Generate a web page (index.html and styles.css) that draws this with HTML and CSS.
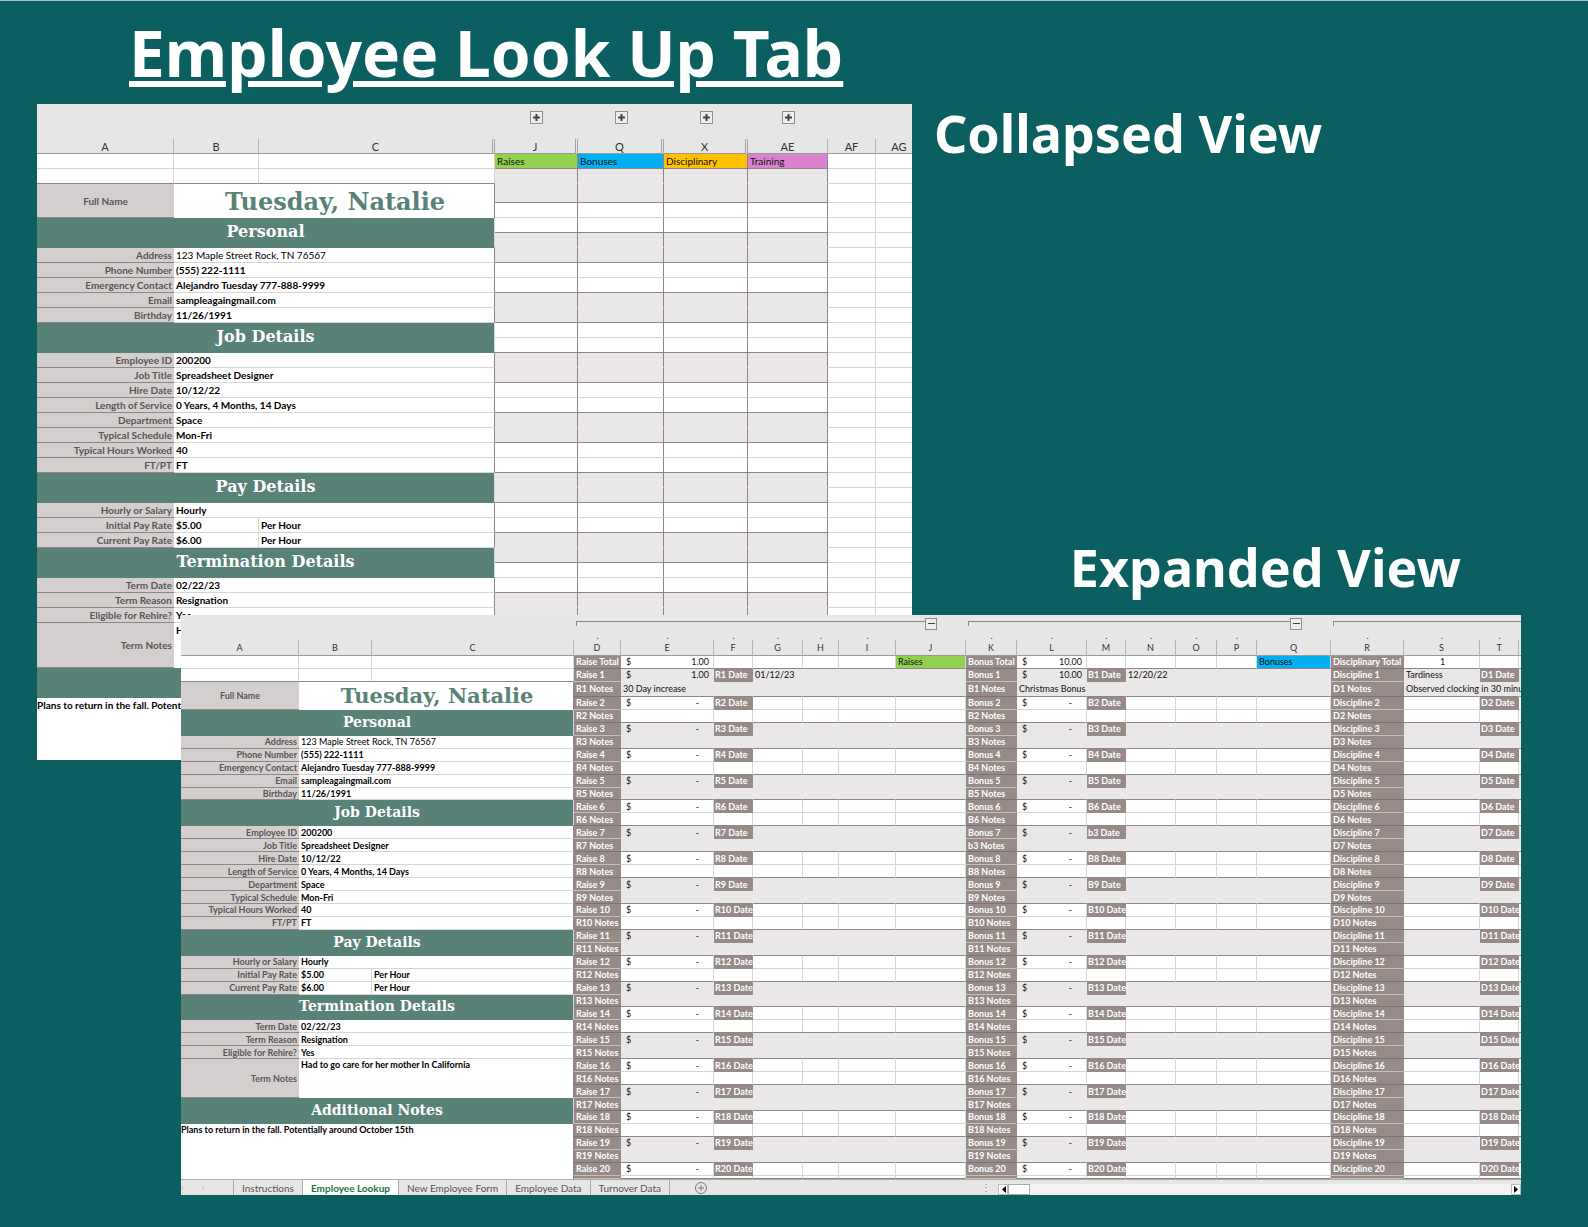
FILE: index.html
```
<!DOCTYPE html>
<html lang="en">
<head>
<meta charset="UTF-8" />
<meta name="viewport" content="width=device-width, initial-scale=1.0"/>
<title>Employee Look Up Tab</title>
<link rel="stylesheet" href="styles.css">
</head>
<body>

<h1>Employee Look Up Tab</h1>

<div class="top">
<section class="sheet collapsed">
<table id="collapsedTable"></table>
</section>
<div class="captions">
<h2>Collapsed View</h2>
<h2 class="right">Expanded View</h2>
</div>
</div>

<section class="sheet expanded">
<table id="expandedTable"></table>
<div class="tabbar">
<span class="arrows"><span>‹</span><span>›</span></span>
<button class="tab">Instructions</button>
<button class="tab active">Employee Lookup</button>
<button class="tab">New Employee Form</button>
<button class="tab">Employee Data</button>
<button class="tab last-tab">Turnover Data</button>
<button class="add" aria-label="New sheet">
<svg width="12" height="12" viewBox="0 0 12 12"><circle cx="6" cy="6" r="5.5" fill="none" stroke="#777"/><path d="M6 3v6M3 6h6" stroke="#777"/></svg>
</button>
<span class="grip">⋮</span>
<div class="scroll">
<button aria-label="Scroll left"><svg width="5" height="7" viewBox="0 0 5 7"><path d="M5 0v7L1 3.5z"/></svg></button>
<span class="thumb"></span>
<button class="end" aria-label="Scroll right"><svg width="5" height="7" viewBox="0 0 5 7"><path d="M0 0v7l4-3.5z"/></svg></button>
</div>
</div>
</section>

<script src="script.js"></script>
</body>
</html>
```

FILE: styles.css
```
* { box-sizing: border-box; }
body {
margin: 0;
border-top: 1px solid #9cc4c4;
background-color: #0b5f61;
color: #fff;
font-family: Lato, sans-serif;
min-height: 100vh;
overflow-x: hidden;
}
h1, h2 {
margin: 0;
font-family: "Noto Sans", sans-serif;
font-weight: 700;
white-space: nowrap;
}
h1 {
padding-left: 129px;
height: 103px;
font-size: 64px;
line-height: 104px;
text-decoration: underline;
text-decoration-thickness: 6px;
text-underline-offset: 4px;
}
h2 {
font-size: 52px;
line-height: 58px;
}
.top {
display: flex;
}
.captions {
flex: 1;
display: flex;
flex-direction: column;
justify-content: space-between;
padding: 0 127px 164px 22px;
}
.right { text-align: right; }

/* sheets */
.sheet {
background: #fff;
color: #111;
overflow: hidden;
}
.collapsed {
margin-left: 37px;
width: 55.1%;
font-size: 10px;
line-height: 13px;
}
.expanded {
position: relative;
margin: -145px 67px 32px 181px;
font-size: 9px;
line-height: 10px;
}
table {
table-layout: fixed;
width: 100%;
border-collapse: separate;
border-spacing: 0;
}
.expanded table { height: 564px; }
th, td {
padding: 0;
font-weight: normal;
text-align: left;
white-space: nowrap;
}
td {
border-right: 1px solid #d6d6d6;
border-bottom: 1px solid #d6d6d6;
padding: 1px 0 0 2px;
}
tbody tr { height: 15px; }
tbody tr.third { height: 19px; }
tbody tr.last { height: 2px; }
.expanded tbody tr { height: 12px; }
.expanded tbody tr.third { height: 14px; }
.expanded tbody tr.last { height: 3px; }

/* column headings */
thead th {
background: #e6e6e6;
color: #333;
text-align: center;
}
.outline { height: 35px; }
.dots { height: 0; }
.expanded .outline { height: 17px; }
.expanded .dots { height: 8px; }
.dots th { line-height: 6px; }
.letters { height: 15px; }
.letters th {
border-right: 1px solid #b5b5b5;
border-bottom: 1px solid #999;
}
.letters th.gap { border-right: 3px double #a5a5a5; }
.collapsed .letters { font-size: 11px; }
.expanded .letters { height: 16px; }
.toggle {
display: inline-flex;
align-items: center;
justify-content: center;
width: 13px;
height: 13px;
padding: 0;
border: 1px solid #8b8f94;
background: #eee;
vertical-align: middle;
}
.collapsed .outline th { padding-bottom: 9px; }
.group {
display: flex;
align-items: center;
padding-left: 2px;
}
.group .line {
flex: 1;
height: 5px;
border: solid #8a8a8a;
border-width: 1px 0 0 1px;
}
.group .toggle { width: 12px; height: 12px; }
.group .rest { width: 29px; }

/* employee card */
.label {
background: #d3cfce;
border-bottom-color: #8f8584;
border-right: 0;
color: #595556;
font-weight: bold;
text-align: right;
padding-right: 2px;
}
.name-label { text-align: center; }
.value {
color: #000;
font-weight: bold;
}
.value.plain { font-weight: normal; }
.edge { border-right-color: #8f8584; }
.section, .name {
font-family: "DejaVu Serif", serif;
font-weight: bold;
text-align: center;
}
.section {
background: #588277;
border-bottom-color: #588277;
color: #fff;
font-size: 16px;
padding: 0 0 3px;
}
.name {
color: #588277;
font-size: 24px;
line-height: 28px;
border-bottom: 0;
}
.expanded .section { font-size: 14px; padding-bottom: 1px; }
.expanded .name { font-size: 21px; line-height: 24px; }
.top-edge td:nth-child(-n+3) { border-bottom-color: #8f8584; }
.notes { vertical-align: top; border-bottom: 0; }
.extra { padding-left: 0; }

/* history columns */
.gray {
background: #e9e7e8;
border-right-color: #e9e7e8;
border-bottom-color: #e9e7e8;
}
.band-end { border-bottom-color: #8f8584; }
.collapsed .history { border-right-color: #8f8584; }
.tag {
background: #968b89;
border-right-color: #968b89;
border-bottom-color: #c9c0b0;
color: #fff;
font-weight: bold;
}
.tag.band-end { border-bottom-color: #7d7270; }
.date { border-bottom-color: #968b89; padding-left: 1px; border-right: 0; }
.center { text-align: center; }
.money div {
display: flex;
justify-content: space-between;
padding: 0 4px 0 3px;
}
.money .none { padding-right: 10px; }
.raises { background: #92d050; }
.bonuses { background: #00b0f0; }
.disciplinary { background: #ffc000; }
.training { background: #da82cf; }

/* sheet tabs */
.tabbar {
display: flex;
height: 16px;
background: #e6e6e6;
border-top: 1px solid #aaa;
font-size: 10px;
}
.tabbar button {
border: 0;
padding: 0;
font-family: inherit;
font-size: inherit;
}
.arrows {
display: flex;
gap: 18px;
width: 52px;
color: #aaa;
line-height: 14px;
}
.tabbar .tab {
padding: 0 8px;
background: #e6e6e6;
border-left: 1px solid #aaa;
color: #555;
}
.tabbar .active {
background: #fff;
color: #1a7343;
font-weight: bold;
}
.tabbar .last-tab { border-right: 1px solid #aaa; }
.tabbar .add {
display: flex;
align-items: center;
margin-left: 25px;
background: none;
}
.grip {
margin-left: auto;
margin-right: 7px;
color: #888;
line-height: 15px;
}
.scroll {
display: flex;
width: 39%;
margin-top: 4px;
background: #f2f2f2;
}
.scroll button {
display: flex;
align-items: center;
justify-content: center;
width: 10px;
background: #fff;
border: 1px solid #bbb;
}
.scroll .thumb {
width: 22px;
background: #fff;
border: 1px solid #aaa;
}
.scroll .end { margin-left: auto; }
```

FILE: script.js
```
const ROWS = 41;

// employee card, keyed by the table row it starts on
const card = {
2: { label: "Full Name", name: "Tuesday, Natalie", span: 2 },
4: { section: "Personal" },
6: { label: "Address", value: "123 Maple Street Rock, TN 76567", plain: true },
7: { label: "Phone Number", value: "(555) 222-1111" },
8: { label: "Emergency Contact", value: "Alejandro Tuesday 777-888-9999" },
9: { label: "Email", value: "sampleagaingmail.com" },
10: { label: "Birthday", value: "11/26/1991" },
11: { section: "Job Details" },
13: { label: "Employee ID", value: "200200" },
14: { label: "Job Title", value: "Spreadsheet Designer" },
15: { label: "Hire Date", value: "10/12/22" },
16: { label: "Length of Service", value: "0 Years, 4 Months, 14 Days" },
17: { label: "Department", value: "Space" },
18: { label: "Typical Schedule", value: "Mon-Fri" },
19: { label: "Typical Hours Worked", value: "40" },
20: { label: "FT/PT", value: "FT" },
21: { section: "Pay Details" },
23: { label: "Hourly or Salary", value: "Hourly" },
24: { label: "Initial Pay Rate", value: "$5.00", unit: "Per Hour" },
25: { label: "Current Pay Rate", value: "$6.00", unit: "Per Hour" },
26: { section: "Termination Details" },
28: { label: "Term Date", value: "02/22/23" },
29: { label: "Term Reason", value: "Resignation" },
30: { label: "Eligible for Rehire?", value: "Yes" },
31: { label: "Term Notes", value: "Had to go care for her mother In California", span: 3, notes: true },
34: { section: "Additional Notes" },
36: { extra: "Plans to return in the fall. Potentially around October 15th" }
};

function cardCells(r) {
if (r < 2) return `<td></td><td></td><td></td>`;
const c = card[r];
if (!c) return "";
if (c.section) return `<td class="section" colspan="3" rowspan="2">${c.section}</td>`;
if (c.extra) return `<td class="value notes extra edge" colspan="3" rowspan="5">${c.extra}</td>`;
const span = c.span || 1;
if (c.name) {
return `<td class="label name-label" rowspan="2">${c.label}</td><td class="name edge" colspan="2" rowspan="2">${c.name}</td>`;
}
const label = `<td class="label" rowspan="${span}">${c.label}</td>`;
if (c.unit) return `${label}<td class="value">${c.value}</td><td class="value edge">${c.unit}</td>`;
return `${label}<td class="value edge${c.plain ? " plain" : ""}${c.notes ? " notes" : ""}" colspan="2" rowspan="${span}">${c.value}</td>`;
}

// band 1 is rows 1-2, band 2 is rows 3-4 and so on, odd bands are shaded
function bandClass(r) {
let cls = Math.ceil(r / 2) % 2 === 1 ? "gray" : "";
if (r % 2 === 0) cls += " band-end";
return cls;
}

function cols(widths) {
return "<colgroup>" + widths.map(w => `<col style="width:${w}px">`).join("") + "</colgroup>";
}

function rowClass(r) {
if (r === 1) return "top-edge";
if (r === 2) return "third";
if (r === ROWS - 1) return "last";
return "";
}

const sign = plus => `<svg width="7" height="7" viewBox="0 0 7 7"><path d="M0 3.5h7${plus ? "M3.5 0v7" : ""}" stroke="#444" stroke-width="${plus ? 2 : 1}"/></svg>`;

function buildCollapsed() {
const groups = ["Raises", "Bonuses", "Disciplinary", "Training"];
let html = cols([137, 85, 236, 83, 86, 84, 80, 48, 47]);
html += `<thead><tr class="outline"><th></th><th></th><th></th>`;
html += groups.map(() => `<th><button class="toggle" aria-label="Expand">${sign(true)}</button></th>`).join("");
html += `<th></th><th></th></tr><tr class="letters">`;
["A", "B", "C", "J", "Q", "X", "AE", "AF", "AG"].forEach((l, i) => {
html += `<th class="${i > 1 && i < 6 ? "gap" : ""}">${l}</th>`;
});
html += `</tr></thead><tbody>`;
for (let r = 0; r < ROWS; r++) {
html += `<tr class="${rowClass(r)}">${cardCells(r)}`;
groups.forEach(g => {
if (r === 0) html += `<td class="history band-end ${g.toLowerCase()}">${g}</td>`;
else html += `<td class="history ${bandClass(r)}"></td>`;
});
html += `<td></td><td></td></tr>`;
}
document.getElementById("collapsedTable").innerHTML = html + "</tbody>";
}

const history = [
{ total: "Raise Total", item: "Raise", code: "R", sum: "1.00", date: "01/12/23", note: "30 Day increase", title: "Raises" },
{ total: "Bonus Total", item: "Bonus", code: "B", sum: "10.00", date: "12/20/22", note: "Christmas Bonus", title: "Bonuses" },
{ total: "Disciplinary Total", item: "Discipline", code: "D", count: "1", first: "Tardiness", note: "Observed clocking in 30 minu" }
];

function money(text) {
return `<div><span>$</span><span class="${text === "-" ? "none" : ""}">${text}</span></div>`;
}

// seven columns for raises and bonuses, the disciplinary block stops after four
function historyCells(g, r) {
const band = bandClass(r);
const n = Math.ceil(r / 2);
const code = g.code === "B" && n === 7 ? "b3" : g.code + n;
const blank = `<td class="${band}"></td>`;
const tail = g.title ? blank.repeat(3) : "";
if (r === 0) {
const amount = g.sum ? `<td class="money band-end">${money(g.sum)}</td>` : `<td class="center band-end">${g.count}</td>`;
const title = g.title ? blank.repeat(2) + `<td class="band-end ${g.title.toLowerCase()}">${g.title}</td>` : "";
return `<td class="tag band-end">${g.total}</td>${amount}${blank}${blank}${title}`;
}
if (r === ROWS - 1) return `<td class="tag"></td>${blank.repeat(3)}${tail}`;
if (r % 2 === 0) {
return `<td class="tag band-end">${code} Notes</td><td class="${band}">${n === 1 ? g.note : ""}</td>${blank}${blank}${tail}`;
}
let amount = `<td class="${band}">${n === 1 && g.first ? g.first : ""}</td>`;
if (g.sum) amount = `<td class="money ${band}">${money(n === 1 ? g.sum : "-")}</td>`;
return `<td class="tag">${g.item} ${n}</td>${amount}`
+ `<td class="tag date">${code} Date</td><td class="${band}">${n === 1 && g.date ? g.date : ""}</td>${tail}`;
}

function buildExpanded() {
let html = cols([118, 73, 202, 47, 93, 39, 50, 36, 57, 70, 51, 70, 39, 50, 41, 40, 74, 73, 76, 39, 50]);
const bracket = `<th colspan="7"><div class="group"><span class="line"></span><button class="toggle" aria-label="Collapse">${sign(false)}</button><span class="rest"></span></div></th>`;
html += `<thead><tr class="outline"><th></th><th></th><th></th>${bracket}${bracket}<th colspan="4"><div class="group"><span class="line"></span></div></th></tr>`;
const letters = "ABCDEFGHIJKLMNOPQRST".split("");
html += `<tr class="dots">` + letters.map(l => `<th>${"ABCJQ".includes(l) ? "" : "."}</th>`).join("") + `<th></th></tr>`;
html += `<tr class="letters">` + letters.map(l => `<th>${l}</th>`).join("") + `<th></th></tr></thead><tbody>`;
for (let r = 0; r < ROWS; r++) {
html += `<tr class="${rowClass(r)}">${cardCells(r)}${history.map(g => historyCells(g, r)).join("")}</tr>`;
}
document.getElementById("expandedTable").innerHTML = html + "</tbody>";
}

buildCollapsed();
buildExpanded();
```
